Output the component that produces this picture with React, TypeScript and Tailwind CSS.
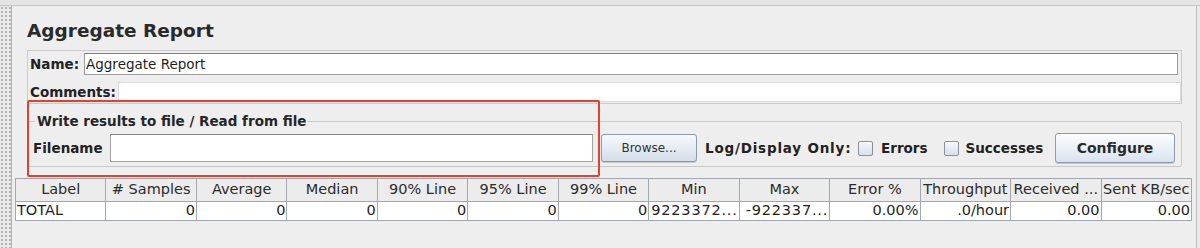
import React from "react";

const columns = [
  "Label",
  "# Samples",
  "Average",
  "Median",
  "90% Line",
  "95% Line",
  "99% Line",
  "Min",
  "Max",
  "Error %",
  "Throughput",
  "Received ...",
  "Sent KB/sec",
];

const totals = ["TOTAL", "0", "0", "0", "0", "0", "0", "9223372...", "-922337...", "0.00%", ".0/hour", "0.00", "0.00"];

function Checkbox() {
  return (
    <span className="inline-block w-[15px] h-[15px] shrink-0 rounded-[2px] border border-[#8e9197] bg-gradient-to-b from-[#f4f7fb] to-[#d7e1ec] shadow-[inset_0_1px_0_#ffffff]" />
  );
}

export default function App() {
  return (
    <div className="relative w-[1200px] h-[248px] overflow-hidden bg-[#eeeeee] text-[#222222] font-['DejaVu_Sans',sans-serif] flex flex-col">
      {/* top strip */}
      <div className="h-[6px] shrink-0 bg-[#e4e4e4] border-b border-[#c4c4c4]" />

      <div className="flex flex-1 min-h-0">
        {/* left dotted splitter */}
        <div className="w-[12px] shrink-0 border-r border-[#b4b4b4] bg-[#e9e9e9] bg-[radial-gradient(circle,#b3b3b3_0.8px,transparent_1px)] bg-[length:4px_4px]" />

        {/* main panel */}
        <div className="w-[1184px] shrink-0 flex flex-col">
          <div className="h-[44px] pl-[15px] pt-[14px]">
            <h1 className="text-[18.5px] leading-[21px] font-bold text-[#2a2a2a]">Aggregate Report</h1>
          </div>

          {/* name / comments */}
          <div className="ml-[15px] w-[1155px] h-[54px] border border-[#cbcbcb] pt-[2px] pl-[2px] pr-[3px] flex flex-col">
            <div className="flex items-center h-[22px]">
              <span className="w-[54px] shrink-0 text-[13.5px] font-bold">Name:</span>
              <div className="flex-1 h-[22px] bg-white border border-[#9c9c9c] border-t-[#7f7f7f] flex items-center pl-[1px] text-[13.5px] text-[#1e1e1e]">
                Aggregate Report
              </div>
            </div>
            <div className="flex items-center h-[20px] mt-[7px] -mr-[3px]">
              <span className="w-[88px] shrink-0 text-[13.5px] font-bold">Comments:</span>
              <div className="flex-1 h-[20px] bg-white border border-[#dadada]" />
            </div>
          </div>

          {/* write results group */}
          <fieldset className="ml-[15px] mt-[9px] w-[1155px] border border-[#c9c9c9] rounded-[2px] pl-[5px] pr-[5px] pt-[3px] pb-[3px]">
            <legend className="ml-[2px] px-[2px] text-[13.5px] leading-[17px] font-bold text-[#262626]">
              Write results to file / Read from file
            </legend>
            <div className="flex items-center h-[30px]">
              <span className="w-[77px] shrink-0 text-[13.5px] font-bold">Filename</span>
              <div className="w-[483px] h-[28px] shrink-0 bg-white border border-[#a3a3a3] border-t-[#868686]" />
              <button className="ml-[8px] w-[96px] h-[28px] shrink-0 rounded-[3px] border border-[#8d99a8] bg-gradient-to-b from-[#f6f9fc] to-[#d5dfea] text-[12px] text-[#333333] shadow-[0_1px_0_#c9c9c9]">
                Browse...
              </button>
              <span className="ml-[8px] w-[145px] shrink-0 text-[13.5px] font-bold whitespace-nowrap tracking-[0.8px]">
                Log/Display Only:
              </span>
              <span className="ml-[8px] flex">
                <Checkbox />
              </span>
              <span className="ml-[8px] text-[13.5px] font-bold">Errors</span>
              <span className="ml-[16px] flex">
                <Checkbox />
              </span>
              <span className="ml-[7px] text-[13.5px] font-bold">Successes</span>
              <button className="ml-auto mr-[1px] w-[120px] h-[30px] shrink-0 rounded-[3px] border border-[#8e9aab] bg-gradient-to-b from-[#fbfdff] to-[#d9e3ee] text-[14px] font-bold text-[#2a2a2a] shadow-[0_1px_0_#c9c9c9]">
                Configure
              </button>
            </div>
          </fieldset>

          {/* results table */}
          <div className="ml-[3px] mt-[11px] w-[1177px] text-[14.5px]">
            <div className="grid grid-cols-13 h-[24px] bg-[#ececec] border-t border-l border-b border-[#a2a8b0]">
              {columns.map((c) => (
                <div
                  key={c}
                  className="flex items-center justify-center border-r border-[#a2a8b0] overflow-hidden whitespace-nowrap text-[#2b2b2b]"
                >
                  {c}
                </div>
              ))}
            </div>
            <div className="grid grid-cols-13 h-[19px] bg-white border-l border-b border-[#a2a8b0]">
              {totals.map((v, i) => (
                <div
                  key={i}
                  className={`flex items-center border-r border-[#a2a8b0] overflow-hidden whitespace-nowrap text-[#1e1e1e] ${
                    i === 0 ? "justify-start pl-[1px]" : "justify-end pr-[1px]"
                  } ${i === 7 || i === 8 ? "tracking-[0.8px]" : ""}`}
                >
                  {v}
                </div>
              ))}
            </div>
          </div>
        </div>

        {/* right edge */}
        <div className="flex-1 border-l border-[#bdbdbd] bg-[#ebebeb]" />
      </div>

      {/* highlight annotation */}
      <div className="absolute left-[27px] top-[100px] w-[573px] h-[77px] border-2 border-[#e4402f] rounded-[2px] pointer-events-none" />
    </div>
  );
}
